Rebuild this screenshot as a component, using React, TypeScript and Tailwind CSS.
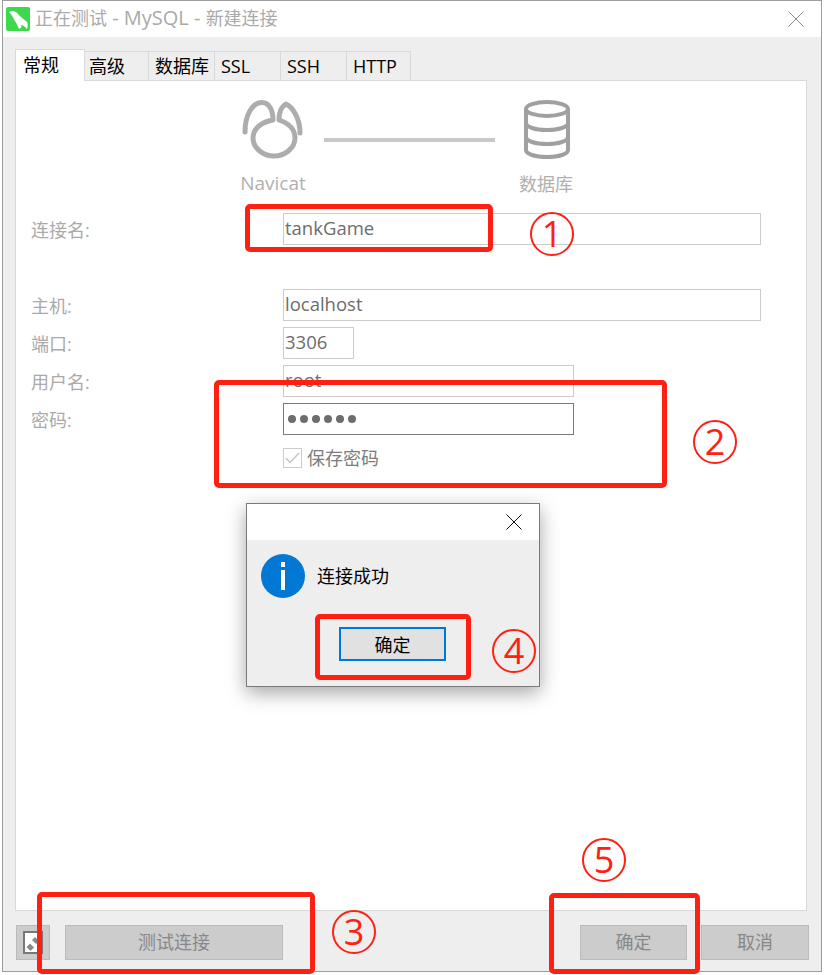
import type { ReactNode } from 'react';

const cjk = "font-['Open_Sans','Noto_Sans_CJK_SC',sans-serif]";

function Field({ label, value, width, focused }: { label: string; value: ReactNode; width: string; focused?: boolean }) {
  return (
    <div className="flex items-center h-[32px]">
      <span className="w-[267px] pl-[15px] pt-[2px] text-[18px] text-[#aaa] leading-none">{label}</span>
      <div className={`${width} h-[32px] border ${focused ? 'border-[#7a7a7a]' : 'border-[#ccc]'} flex items-center pl-[1px] pb-[2px] text-[18.500px] text-[#6d6d6d] bg-white`}>
        {value}
      </div>
    </div>
  );
}

function Tab({ label, width, pad, active }: { label: string; width: string; pad?: string; active?: boolean }) {
  if (active) {
    return (
      <div className={`${width} h-[32px] bg-white border border-b-0 border-[#d9d9d9] -mb-px relative z-10 pl-[7px] text-[18px] text-black flex items-center`}>
        {label}
      </div>
    );
  }
  return (
    <div className={`${width} h-[29px] border border-l-0 border-b-0 border-[#d9d9d9] ${pad ?? 'pl-[6px]'} text-[18px] text-black flex items-center`}>
      {label}
    </div>
  );
}

function NavicatLogo() {
  return (
    <svg width="62" height="60" viewBox="0 0 62 60" fill="none" stroke="#adadad" strokeWidth="5" strokeLinecap="round" strokeLinejoin="round">
      <path d="M3 32C3 14 11 2.500 20 2.500C27 2.500 31 10 31 20C19 22 11 29 11 38C11 48 21 56 32 56C43 56 53 48 53 38C53 29 46 23 37 20C37 12 40 6 44 4C52 8 58 20 58 33" />
    </svg>
  );
}

function DbIcon() {
  return (
    <svg width="46" height="60" viewBox="0 0 46 60" fill="none" stroke="#a0a0a0" strokeWidth="4">
      <ellipse cx="23" cy="9" rx="21" ry="7" />
      <path d="M2 9V50C2 54 11 57 23 57C35 57 44 54 44 50V9" />
      <path d="M2 23C2 27 11 30 23 30C35 30 44 27 44 23" />
      <path d="M2 37C2 41 11 44 23 44C35 44 44 41 44 37" />
    </svg>
  );
}

function AppIcon() {
  return (
    <svg width="24" height="24" viewBox="0 0 24 24" className="shrink-0">
      <rect width="24" height="24" rx="2" fill="#3ed84c" />
      <path d="M3 5C6 3 10 4 12 7C14 10 18 12 21 15C22 17 22 20 21 22C19 20 17 18 15 18C16 20 15 21 13 22C12 20 11 17 9 14C7 11 7 9 3 5Z" fill="#fff" />
    </svg>
  );
}

function CloseX({ color, size }: { color: string; size: number }) {
  return (
    <svg width={size} height={size} viewBox="0 0 16 16" fill="none" stroke={color} strokeWidth="1">
      <path d="M0.500 0.500L15.500 15.500M15.500 0.500L0.500 15.500" />
    </svg>
  );
}

function GrayButton({ label, width }: { label: string; width: string }) {
  return (
    <div className={`${width} h-[35px] shrink-0 bg-[#ccc] border border-[#bbb] flex items-center justify-center text-[18px] text-[#888]`}>
      {label}
    </div>
  );
}

function Mark({ className }: { className: string }) {
  return <div className={`absolute border-[5px] border-[#ff2013] rounded-[5px] ${className}`} />;
}

function Num({ n, className }: { n: string; className: string }) {
  return (
    <div className={`absolute w-[44px] h-[44px] rounded-full border-[2.500px] border-[#ff2013] flex items-center justify-center text-[36px] leading-none text-[#ff2013] ${className}`}>
      {n}
    </div>
  );
}

export default function App() {
  return (
    <div className={`relative w-[824px] h-[975px] bg-white overflow-hidden ${cjk}`}>
      <div className="absolute left-[2px] top-0 w-[820px] h-[972px] border border-[#9d9d9d] flex flex-col bg-[#eee]">
        <div className="h-[36px] bg-white flex items-center pl-[3px] pr-[17px]">
          <AppIcon />
          <span className="ml-[5px] pb-[2px] text-[18px] text-[#aaa] flex-1 whitespace-pre">
            正在测试<span className="text-[20px]"> - MySQL - </span>新建连接
          </span>
          <CloseX color="#8a8a8a" size={16} />
        </div>

        <div className="flex-1 flex flex-col pl-[12px] pr-[12px] pt-[12px]">
          <div className="flex items-end">
            <Tab label="常规" width="w-[70px]" active />
            <Tab label="高级" width="w-[64px]" pad="pl-[4px]" />
            <Tab label="数据库" width="w-[66px]" />
            <Tab label="SSL" width="w-[66px]" />
            <Tab label="SSH" width="w-[66px]" />
            <Tab label="HTTP" width="w-[64px]" />
          </div>

          <div className="h-[831px] w-[792px] bg-white border border-[#d9d9d9] flex flex-col">
            <div className="flex items-start pl-[226px] pt-[19px] h-[132px]">
              <div className="w-[62px] flex flex-col items-center">
                <NavicatLogo />
                <span className="mt-[9px] text-[19px] text-[#b0b0b0] whitespace-nowrap">Navicat</span>
              </div>
              <div className="w-[171px] h-[4px] bg-[#c8c8c8] mt-[38px] ml-[20px]" />
              <div className="w-[46px] ml-[29px] flex flex-col items-center">
                <DbIcon />
                <span className="mt-[11px] pr-[2px] text-[18px] text-[#b0b0b0] whitespace-nowrap">数据库</span>
              </div>
            </div>

            <Field label="连接名:" value="tankGame" width="w-[478px]" />
            <div className="h-[44px]" />
            <Field label="主机:" value="localhost" width="w-[478px]" />
            <div className="h-[6px]" />
            <Field label="端口:" value="3306" width="w-[71px]" />
            <div className="h-[6px]" />
            <Field label="用户名:" value="root" width="w-[291px]" />
            <div className="h-[6px]" />
            <Field
              label="密码:"
              width="w-[291px]"
              focused
              value={
                <div className="flex gap-[4px] ml-[3px] mt-[2px]">
                  {[0, 1, 2, 3, 4, 5].map((i) => (
                    <div key={i} className="w-[8px] h-[8px] rounded-full bg-[#6d6d6d]" />
                  ))}
                </div>
              }
            />

            <div className="flex items-center gap-[5px] pl-[267px] mt-[8px]">
              <div className="w-[19px] h-[20px] border border-[#ccc] flex items-center justify-center">
                <svg width="15" height="12" viewBox="0 0 15 12" fill="none" stroke="#c4c4c4" strokeWidth="1.500">
                  <path d="M1 6L5 10.500L14 1" />
                </svg>
              </div>
              <span className="pt-[2px] text-[18px] text-[#7d7d7d]">保存密码</span>
            </div>
          </div>

          <div className="flex items-center mt-[14px]">
            <div className="w-[34px] h-[35px] shrink-0 bg-[#ccc] border border-[#bbb] ml-px flex items-center justify-center">
              <svg width="20" height="23" viewBox="0 0 20 23">
                <rect x="1" y="1" width="18" height="21" fill="#fff" stroke="#777" strokeWidth="2" />
                <path d="M7 12.500L11 16.500L7.500 20L3.500 16ZM12 6L16 10L13 13L9 9Z" fill="#8a8a8a" />
              </svg>
            </div>
            <div className="ml-[15px]">
              <GrayButton label="测试连接" width="w-[218px]" />
            </div>
            <div className="ml-[297px]">
              <GrayButton label="确定" width="w-[107px]" />
            </div>
            <div className="ml-[14px]">
              <GrayButton label="取消" width="w-[108px]" />
            </div>
          </div>
        </div>
      </div>

      <div className="absolute left-[246px] top-[503px] w-[294px] h-[184px] border border-[#7a7a7a] bg-[#eee] shadow-[0_6px_18px_rgba(0,0,0,0.35)] flex flex-col">
        <div className="h-[36px] bg-white flex items-center justify-end pr-[17px]">
          <CloseX color="#111" size={16} />
        </div>
        <div className="flex items-center pl-[14px] pt-[14px]">
          <div className="w-[44px] h-[44px] rounded-full bg-[#0078d4] flex flex-col items-center justify-center gap-[3px]">
            <div className="w-[4px] h-[5px] bg-white" />
            <div className="w-[4px] h-[20px] bg-white" />
          </div>
          <span className="ml-[12px] text-[18px] text-black">连接成功</span>
        </div>
        <div className="flex justify-end pr-[93px] mt-[29px]">
          <div className="w-[107px] h-[34px] pt-[2px] bg-[#e1e1e1] border-2 border-[#0078d7] flex items-center justify-center text-[18px] text-black">
            确定
          </div>
        </div>
      </div>

      <Mark className="left-[245px] top-[204px] w-[248px] h-[48px]" />
      <Mark className="left-[214px] top-[380px] w-[453px] h-[108px]" />
      <Mark className="left-[37px] top-[892px] w-[278px] h-[82px]" />
      <Mark className="left-[315px] top-[614px] w-[156px] h-[66px]" />
      <Mark className="left-[549px] top-[893px] w-[151px] h-[81px]" />

      <Num n="1" className="left-[530px] top-[212px]" />
      <Num n="2" className="left-[693px] top-[420px]" />
      <Num n="3" className="left-[332px] top-[910px]" />
      <Num n="4" className="left-[492px] top-[629px]" />
      <Num n="5" className="left-[582px] top-[838px]" />
    </div>
  );
}
